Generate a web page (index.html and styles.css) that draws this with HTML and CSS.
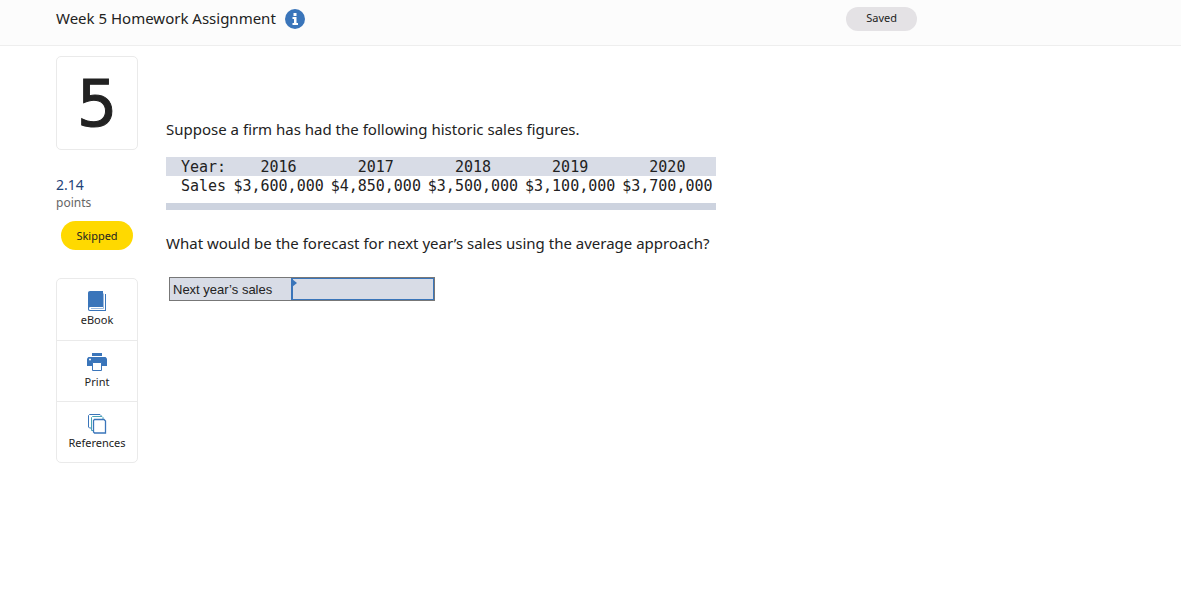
FILE: index.html
```html
<!DOCTYPE html>
<html lang="en">
<head>
    <meta charset="UTF-8">
    <meta name="viewport" content="width=device-width, initial-scale=1.0">
    <title>Week 5 Homework Assignment</title>
    <link rel="stylesheet" href="styles.css">
</head>
<body>
    <header class="topbar">
        <h1>Week 5 Homework Assignment</h1>
        <button class="info" type="button" aria-label="Assignment info">
            <svg width="20" height="20" viewBox="0 0 20 20">
                <circle cx="10" cy="10" r="10" fill="#3a75ba"/>
                <path d="M8.500 4h3v3h-3zM7.500 8h4v6H13v2H7.500v-2H9v-4H7.500z" fill="#fff"/>
            </svg>
        </button>
        <span class="saved">Saved</span>
    </header>

    <div class="page">
        <aside class="sidebar">
            <div class="number">5</div>
            <div class="points">2.14</div>
            <div class="points-label">points</div>
            <div class="skipped">Skipped</div>
            <nav class="tools">
                <button type="button">
                    <svg width="20" height="20" viewBox="0 0 20 20">
                        <path d="M3 0h13v16H3.500c-1 0-1.500.5-1.500 1.500S2.500 19 3.500 19H18V3h1v17H3c-1.500 0-2-1-2-2V2c0-1.200.8-2 2-2z" fill="#3a75ba"/>
                        <path d="M4 17.500h12.500v-15" fill="none" stroke="#9dbadd"/>
                    </svg>
                    <span>eBook</span>
                </button>
                <button type="button">
                    <svg width="20" height="20" viewBox="0 0 20 20">
                        <path d="M5 0h10v3H5z" fill="#3a75ba"/>
                        <path d="M1.500 4h17L20 5.500V13H0V5.500z" fill="#3a75ba"/>
                        <circle cx="3" cy="6.500" r="1" fill="#fff"/>
                        <path d="M5.500 9.500h9v8h-9z" fill="#fff" stroke="#3a75ba"/>
                    </svg>
                    <span>Print</span>
                </button>
                <button type="button">
                    <svg width="20" height="20" viewBox="0 0 20 20" fill="#fff" stroke="#3a75ba">
                        <path d="M2.500 14l-1-1V1.500l1-1H13l1 1V14z"/>
                        <path d="M4.500 16.500V3.500l1-1H15l1 1v13z" stroke="#4aa5b5"/>
                        <path d="M7.500 5.500H17l1.500 1.500v12H7.500l-1-1V6.500z" stroke-width="1.300"/>
                    </svg>
                    <span>References</span>
                </button>
            </nav>
        </aside>

        <main class="question">
            <p>Suppose a firm has had the following historic sales figures.</p>
            <table class="figures">
                <tr>
                    <th>Year:</th>
                    <th>2016</th>
                    <th>2017</th>
                    <th>2018</th>
                    <th>2019</th>
                    <th>2020</th>
                </tr>
                <tr>
                    <td>Sales</td>
                    <td>$3,600,000</td>
                    <td>$4,850,000</td>
                    <td>$3,500,000</td>
                    <td>$3,100,000</td>
                    <td>$3,700,000</td>
                </tr>
            </table>
            <p>What would be the forecast for next year’s sales using the average approach?</p>
            <form class="answer">
                <label for="sales">Next year’s sales</label>
                <div class="field">
                    <input type="text" id="sales">
                </div>
            </form>
        </main>
    </div>
</body>
</html>
```
FILE: styles.css
```css
* {
    box-sizing: border-box;
}
body {
    margin: 0;
    background: #fff;
    color: #222;
    font-family: "Noto Sans", sans-serif;
    font-size: 15px;
    line-height: 20px;
}
button {
    font-family: inherit;
    color: inherit;
    background: none;
    border: 0;
    padding: 0;
    cursor: pointer;
}
svg {
    display: block;
}

.topbar {
    display: flex;
    align-items: center;
    height: 46px;
    padding: 0 264px 8px 56px;
    background: #fcfcfc;
    border-bottom: 1px solid #eee;
}
.topbar h1 {
    margin: 0 9px 0 0;
    font-size: 15px;
    font-weight: normal;
    line-height: 18px;
    padding-bottom: 2px;
}
.saved {
    margin-left: auto;
    padding: 0 20px 2px;
    border-radius: 12px;
    background: #e4e2e5;
    font-size: 11px;
    line-height: 22px;
}

.page {
    display: flex;
    gap: 28px;
    padding: 10px 56px;
}
.sidebar {
    flex: 0 0 82px;
}
.number {
    height: 94px;
    border: 1px solid #eaeaea;
    border-radius: 5px;
    font-family: "DejaVu Sans", sans-serif;
    font-size: 64px;
    line-height: 94px;
    text-align: center;
    -webkit-text-stroke: 1px #222;
}
.points {
    margin-top: 26px;
    color: #1f4379;
    font-size: 14px;
    line-height: 18px;
}
.points-label {
    color: #666;
    font-size: 12px;
    line-height: 18px;
}
.skipped {
    width: 72px;
    margin: 9px auto 28px;
    border-radius: 15px;
    background: #ffd900;
    font-size: 11px;
    line-height: 29px;
    text-align: center;
}
.tools {
    border: 1px solid #eaeaea;
    border-radius: 5px;
}
.tools button {
    display: flex;
    flex-direction: column;
    align-items: center;
    width: 100%;
    padding: 12px 0;
    font-size: 11px;
    line-height: 17px;
}
.tools button + button {
    padding-bottom: 11px;
    border-top: 1px solid #eaeaea;
}

.question {
    padding-top: 63px;
}
.question p {
    margin: 0;
}
.figures {
    width: 550px;
    margin: 18px 0 23px;
    border-collapse: collapse;
    table-layout: fixed;
    border-bottom: 7px solid #cdd3df;
    font-family: "DejaVu Sans Mono", monospace;
    font-size: 15px;
    line-height: 18px;
}
.figures th,
.figures td {
    padding: 1px 0 0;
    font-weight: normal;
    text-align: center;
}
.figures th:first-child,
.figures td:first-child {
    width: 64px;
    padding-left: 15px;
    text-align: left;
}
.figures th {
    background: #d8dce6;
}
.figures td {
    padding-bottom: 8px;
}

.answer {
    display: flex;
    width: 266px;
    margin: 24px 3px;
    border: 1px solid #777;
    background: #d8dce6;
    font-family: "Liberation Sans", Arial, sans-serif;
    font-size: 13px;
}
.answer label {
    flex: 0 0 121px;
    padding: 2px 0 0 3px;
    line-height: 20px;
}
.field {
    position: relative;
    flex: 1;
}
.field input {
    display: block;
    width: 100%;
    height: 22px;
    border: 2px solid #3a75ba;
    border-width: 1px 1px 1px 2px;
    background: none;
    outline: none;
}
.field::before {
    content: "";
    position: absolute;
    top: 1px;
    left: 1px;
    border: 4px solid transparent;
    border-left: 5px solid #3a75ba;
    border-right: 0;
}
```
